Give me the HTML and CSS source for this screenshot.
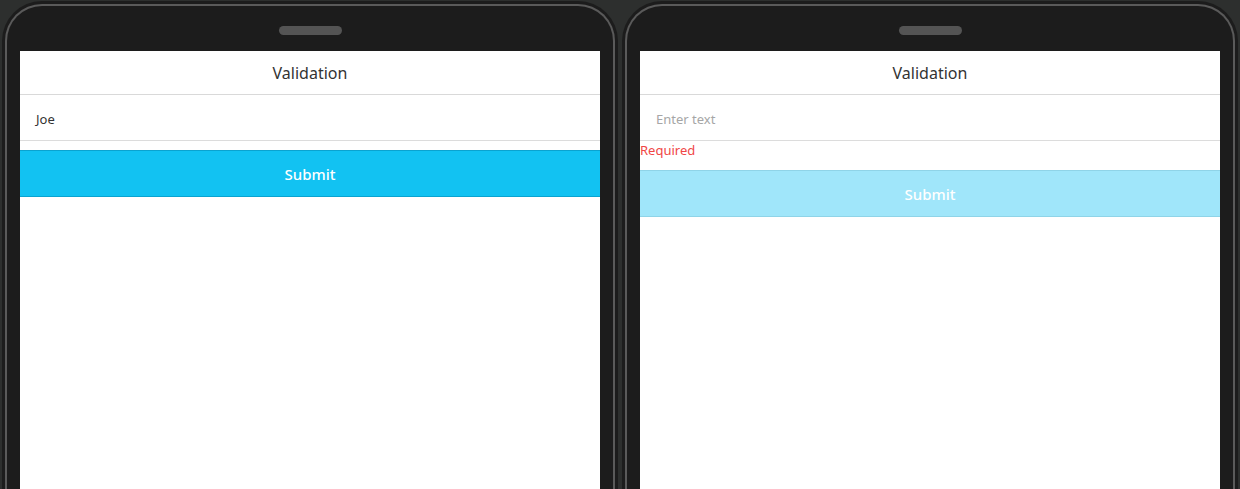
FILE: index.html
```html
<!DOCTYPE html>
<html>
<head>
<meta charset="utf-8">
<link rel="stylesheet" href="styles.css">
</head>
<body>
  <div class="phone">
    <div class="ring">
      <div class="speaker"></div>
      <div class="screen">
        <div class="header">Validation</div>
        <div class="entry"><span class="value">Joe</span></div>
        <div class="button">Submit</div>
      </div>
    </div>
  </div>
  <div class="phone">
    <div class="ring">
      <div class="speaker"></div>
      <div class="screen">
        <div class="header">Validation</div>
        <div class="entry"><span class="placeholder">Enter text</span></div>
        <div class="error">Required</div>
        <div class="button disabled">Submit</div>
      </div>
    </div>
  </div>
</body>
</html>
```
FILE: styles.css
```css
html, body {
  margin: 0;
  height: 100%;
  overflow: hidden;
}
body {
  background: #2d2f2e;
  display: flex;
  gap: 4px;
  padding: 1px 2px 0 2px;
  box-sizing: border-box;
  font-family: "Noto Sans", "Open Sans", sans-serif;
}
.phone {
  width: 616px;
  height: 500px;
  background: #1c1c1c;
  border-radius: 40px 40px 0 0;
  padding: 3px 3px 0 3px;
  box-sizing: border-box;
  flex: none;
}
.ring {
  height: 100%;
  border: 2px solid #5a5a5a;
  border-bottom: none;
  border-radius: 37px 37px 0 0;
  box-sizing: border-box;
  padding: 0 13px;
  display: flex;
  flex-direction: column;
  align-items: center;
}
.speaker {
  width: 63px;
  height: 9px;
  border-radius: 5px;
  background: #545454;
  margin-top: 20px;
  margin-bottom: 16px;
  flex: none;
}
.screen {
  width: 580px;
  flex: 1;
  background: #ffffff;
  display: flex;
  flex-direction: column;
}
.header {
  height: 44px;
  border-bottom: 1px solid #d9d9d9;
  display: flex;
  align-items: center;
  justify-content: center;
  font-size: 16px;
  color: #333333;
  padding-top: 1px;
  box-sizing: border-box;
}
.entry {
  height: 46px;
  border-bottom: 1px solid #dcdcdc;
  display: flex;
  align-items: center;
  padding-left: 16px;
  padding-top: 3px;
  box-sizing: border-box;
  font-size: 13px;
}
.value { color: #333333; }
.placeholder { color: #a6a6a6; }
.error {
  height: 20px;
  line-height: 18px;
  font-size: 13px;
  color: #f04646;
}
.button {
  margin-top: 9px;
  height: 47px;
  box-sizing: border-box;
  background: #12c2f2;
  border-top: 1px solid #0aa3d0;
  border-bottom: 1px solid #0aa3d0;
  display: flex;
  align-items: center;
  justify-content: center;
  color: #ffffff;
  font-size: 15px;
  font-weight: 500;
}
.button.disabled {
  background: #a0e6fa;
  border-color: #8fd4e8;
}
```
